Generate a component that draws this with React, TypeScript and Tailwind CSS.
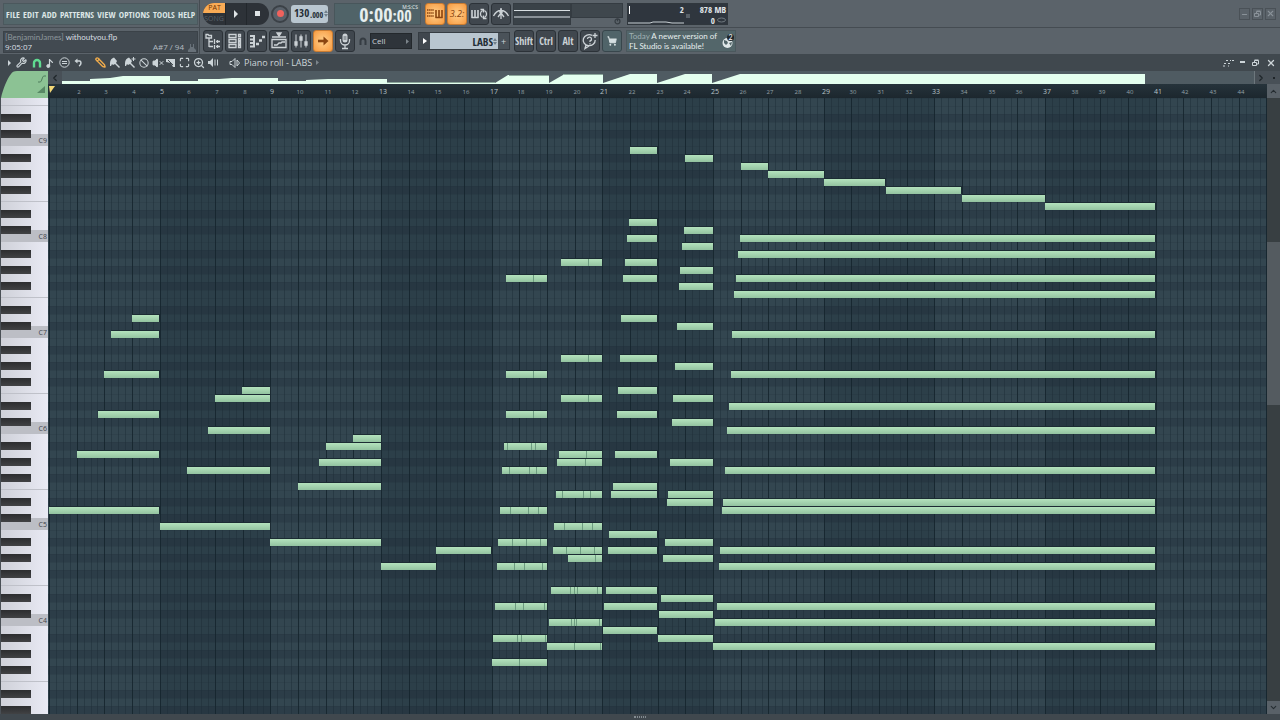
import { useState } from "react";
import type { ReactNode } from "react";
import { clsx } from "clsx";
import {
  Ban,
  ChevronDown,
  ChevronLeft,
  ChevronRight,
  ChevronUp,
  Maximize,
  Minus,
  Pencil,
  ShoppingCart,
  VolumeX,
  Wrench,
  X,
  ZoomIn,
} from "lucide-react";

const ROW = 8;
const ROWS = 77;
const BAR = 27.67;
const BARS = 120;
const LABELLED_BARS = 44;

// the topmost row is F9, one row per semitone going down
const NAMES = ["F", "E", "D#", "D", "C#", "C", "B", "A#", "A", "G#", "G", "F#"];
const rows = Array.from({ length: ROWS }, (_, i) => {
  const name = NAMES[i % 12];
  return { name, octave: 9 - Math.floor((i + 6) / 12), black: name.includes("#") };
});

const barX = (bar: number) => Math.round(1 + (bar - 1) * BAR);

type Chord = { end: number; notes: [start: number, row: number, ...cuts: number[]][] };

// all x values are pixels from the left edge of the grid
const CHORDS: Chord[] = [
  { end: 111, notes: [[1, 51], [29, 44], [50, 39], [56, 34], [63, 29], [84, 27]] },
  { end: 222, notes: [[112, 53], [139, 46], [160, 41], [167, 37], [194, 36]] },
  { end: 333, notes: [[222, 55], [250, 48], [271, 45], [278, 43], [305, 42]] },
  { end: 388, notes: [[333, 58]] },
  { end: 443, notes: [[388, 56]] },
  {
    end: 499,
    notes: [
      [444, 70, 471], [445, 67, 469, 473, 497], [447, 63, 467, 475, 496], [449, 58, 466, 476, 494],
      [450, 55, 464, 478, 492], [452, 51, 462, 480, 490], [454, 46, 461, 481, 488], [456, 43, 459, 483, 487],
      [458, 39, 485], [458, 34, 485], [458, 22, 485],
    ],
  },
  {
    end: 554,
    notes: [
      [499, 68, 526, 552], [501, 65, 523, 526, 528, 551], [503, 61, 522, 526, 529, 549], [520, 57, 547],
      [505, 56, 518, 532, 546], [506, 53, 516, 534, 544], [508, 49, 514, 535, 542], [509, 45, 537],
      [511, 44, 538], [513, 37, 540], [513, 32, 540], [513, 20, 540],
    ],
  },
  {
    end: 609,
    notes: [
      [555, 66], [556, 63], [558, 61], [560, 56], [561, 54], [563, 49], [565, 48], [567, 44], [569, 39],
      [570, 36], [572, 32], [573, 27], [575, 22], [577, 20], [579, 17], [581, 15], [582, 6],
    ],
  },
  {
    end: 665,
    notes: [
      [610, 67], [611, 64], [613, 62], [615, 57], [617, 55], [619, 50], [620, 49], [622, 45], [624, 40],
      [625, 37], [627, 33], [629, 28], [631, 23], [632, 21], [634, 18], [636, 16], [637, 7],
    ],
  },
  {
    end: 1107,
    notes: [
      [665, 68], [667, 65], [669, 63], [671, 58], [672, 56], [674, 51], [675, 50], [677, 46], [679, 41],
      [681, 38], [683, 34], [684, 29], [686, 24], [688, 22], [690, 19], [692, 17], [997, 13],
    ],
  },
  { end: 720, notes: [[693, 8]] },
  { end: 776, notes: [[720, 9]] },
  { end: 837, notes: [[776, 10]] },
  { end: 913, notes: [[838, 11]] },
  { end: 997, notes: [[914, 12]] },
];

const MENU = ["FILE", "EDIT", "ADD", "PATTERNS", "VIEW", "OPTIONS", "TOOLS", "HELP"];

const CONDENSED = "font-['Open_Sans_Condensed','Liberation_Sans_Narrow','Liberation_Sans',sans-serif]";
const NARROW = "font-['Liberation_Sans_Narrow','Open_Sans_Condensed','Liberation_Sans',sans-serif]";

function Glyph({ children, size = 18 }: { children: ReactNode; size?: number }) {
  return (
    <svg width={size} height={size} viewBox="0 0 18 18" fill="none" stroke="currentColor" strokeWidth="1.3">
      {children}
    </svg>
  );
}

function ToolButton({ label, lit, teal, children }: { label: string; lit?: boolean; teal?: boolean; children: ReactNode }) {
  return (
    <button
      aria-label={label}
      className={clsx(
        "flex h-[22px] w-5 shrink-0 items-center justify-center rounded-[3px] border",
        lit && "border-[#c97c32] bg-radial from-[#ffd08a] to-[#f79a3d] text-[#8a4510]",
        teal && "border-[#38464c] bg-[#506469] text-[#d5dfe1]",
        !lit && !teal && "border-[#2c3238] bg-[#40474e] text-[#ccd2d6]"
      )}
    >
      {children}
    </button>
  );
}

function MenuBar() {
  return (
    <nav className="m-[3px] mr-0 flex h-[22px] w-[195px] items-center justify-between border border-[#4b585d] bg-[#53666a] px-[2px]">
      {MENU.map((item) => (
        <button key={item} className={`text-[9px] leading-none text-[#dde6e6] ${CONDENSED}`}>
          {item}
        </button>
      ))}
    </nav>
  );
}

function HintPanel() {
  return (
    <div className="m-[3px] mr-0 flex h-[22px] w-[195px] flex-col justify-center border border-[#3b4248] bg-[#424a51] px-px text-[8px] leading-[10px] text-[#d9dfe2]">
      <div className="font-['Lato',sans-serif]">
        <span className="text-[#8d969c]">[BenjaminJames]</span> withoutyou.flp
      </div>
      <div className="flex items-center justify-between">
        <span>9:05:07</span>
        <span className="flex items-center gap-1 text-[#b4bcc1]">
          A#7 / 94
          <svg width="8" height="9" viewBox="0 0 8 9" fill="#69727a">
            <path d="M2 1h1v3h2V1h1v4l2 2v2H0V7l2-2z" />
          </svg>
        </span>
      </div>
    </div>
  );
}

function Transport() {
  const [pattern, setPattern] = useState(true);
  const [tempo, setTempo] = useState("130");

  return (
    <div className="flex h-7 items-center pl-[3px]">
      <div className="flex h-[22px] w-[66px] overflow-hidden rounded-full bg-[#2d3238] text-[#dfe4e6]">
        <button
          onClick={() => setPattern((v) => !v)}
          className="flex w-[22px] flex-col text-center text-[7px] leading-[10px] font-['Open_Sans',sans-serif]"
        >
          <span className={clsx("h-2.5 w-full pl-px", pattern ? "bg-[#f9ab55] text-[#6b3205]" : "text-[#59616a]")}>PAT</span>
          <span className={clsx("h-3 w-full leading-[11px]", pattern ? "text-[#59616a]" : "bg-[#f9ab55] text-[#6b3205]")}>SONG</span>
        </button>
        <button aria-label="Play" className="flex w-[22px] items-center justify-center border-x border-[#22272c]">
          <svg width="6" height="8" viewBox="0 0 6 8" fill="currentColor"><path d="M1 0l4 4-4 4z" /></svg>
        </button>
        <button aria-label="Stop" className="flex flex-1 items-center justify-center">
          <svg width="6" height="6" fill="currentColor"><rect width="5" height="5" /></svg>
        </button>
      </div>
      <button aria-label="Record" className="ml-[2px] flex size-[18px] items-center justify-center rounded-full border-2 border-[#3b4147] bg-[#59616a]">
        <span className="size-[7px] rounded-full bg-[#f0625d]" />
      </button>
      <label className={`ml-[2px] flex h-[18px] w-[37px] items-center rounded-[3px] bg-[#b9c6d0] pl-[3px] text-[#222c34] ${NARROW}`}>
        <input
          aria-label="Tempo"
          value={tempo}
          onChange={(e) => setTempo(e.target.value)}
          className="w-4 bg-transparent text-[11px] outline-none"
        />
        <span className="w-3.5 pt-0.5 text-[8px]">.000</span>
        <svg width="4" height="7" viewBox="0 0 4 7" fill="#71808b"><path d="M2 0l2 3H0zM2 7l2-3H0z" /></svg>
      </label>
      <div className="relative ml-[6px] flex h-[22px] w-[87px] items-baseline justify-center border border-[#48565b] bg-[#506368] pl-4 text-[#e6eeee]">
        <span className={`text-[20px] leading-[22px] ${NARROW}`}>0:00</span>
        <span className={`text-[16px] leading-[22px] ${NARROW}`}>:00</span>
        <span className="absolute top-0 right-[2px] text-[5px] leading-[6px]">M:S:CS</span>
      </div>
      <div className="ml-1 flex gap-0.5">
        <ToolButton label="Typing keyboard" lit>
          <Glyph>
            <path d="M1 5h7M1 8h7M1 11h7" strokeDasharray="1.5 .6" />
            <path d="M10 5v8M13 5v8M16 5v8M9.500 12.500h7" strokeWidth="1.600" />
          </Glyph>
        </ToolButton>
        <ToolButton label="Countdown" lit>
          <span className="text-[9px] leading-none italic font-['Open_Sans',sans-serif]">3.2:</span>
        </ToolButton>
        <ToolButton label="Blend recording">
          <Glyph>
            <path d="M2 5v8M5 5v8M8 5v8M1.500 12.500h7" strokeWidth="1.600" />
            <path d="M12.500 5.500a4 4 0 0 0 0 7M14.500 5.500a4 4 0 0 1 0 7M10.500 4.500h3v3M16.500 13.500h-3v-3" />
          </Glyph>
        </ToolButton>
        <ToolButton label="Metronome">
          <Glyph>
            <path d="M1.500 11c2-4 4-5.500 7.500-5.500s5.500 1.500 7.500 5.500M9 3v11M9 8l-3 4M9 8l3 4" />
            <path d="M9 3l2 4-2 3-2-3z" fill="currentColor" stroke="none" />
          </Glyph>
        </ToolButton>
      </div>
      <div className="ml-0.5 flex h-[22px]">
        <div className="flex w-[58px] flex-col justify-center gap-[5px] border border-[#353c42] bg-[#3a4248]">
          <span className="h-px bg-[#d9dfe2]" />
          <span className="h-0.5 bg-[#8a9197]" />
        </div>
        <div className="flex w-[52px] flex-col">
          <span className="h-4 border border-[#353c42] bg-[#3f474d]" />
          <svg width="7" height="7" viewBox="0 0 7 7" className="mr-0.5 self-end" fill="none" stroke="#363d43" strokeWidth="1.300">
            <circle cx="3.500" cy="3.500" r="2.600" />
            <path d="M3.500 3.500V1" />
          </svg>
        </div>
      </div>
      <div className={`ml-1 flex h-[22px] w-[101px] border border-[#30373d] bg-[#2f363e] text-[9px] leading-[11px] text-[#e2e7ea] ${CONDENSED}`}>
        <div className="flex w-[56px] flex-col justify-between text-right">
          <span className="flex justify-between"><i className="ml-px mt-0.5 h-2 w-px bg-white" />2</span>
          <svg width="56" height="3" viewBox="0 0 56 3" fill="none" stroke="#c9d0d4"><path d="M0 2h22l3-1h13l6 1h12" /></svg>
        </div>
        <i className="mt-2.5 ml-0.5 size-1 bg-[#596168]" />
        <div className="flex flex-1 flex-col items-end pr-px">
          <span>878 MB</span>
          <span className="flex items-center gap-0.5">
            0
            <svg width="9" height="6" viewBox="0 0 9 6" fill="none" stroke="#70797f"><ellipse cx="4.500" cy="3" rx="4" ry="2" /></svg>
          </span>
        </div>
      </div>
    </div>
  );
}

function Shortcuts() {
  return (
    <div className="flex h-[26px] items-center pl-[3px]">
      <div className="flex gap-0.5">
        <ToolButton label="Browser">
          <Glyph>
            <path d="M2 2.500h2l1 1h2.500V6H2zM5 6v9M5 9.500h4M5 14.500h4" />
            <path d="M10.500 7v5M10.500 13v4M12 9.500h4M13.500 8v3M12 14.500h4M13.500 13v3" />
          </Glyph>
        </ToolButton>
        <ToolButton label="Channel rack">
          <Glyph>
            <path d="M3 2.500h7v3H3zM3 7.500h7v3H3zM3 12.500h7v3H3z" />
            <path d="M12.500 2.500h2v2h-2zM12.500 6.500h2v2h-2zM12.500 10h2v2h-2zM12.500 13.500h2v2h-2z" />
          </Glyph>
        </ToolButton>
        <ToolButton label="Piano roll">
          <Glyph>
            <path d="M2 4h4M2 7.500h4M2 11h4M2 14.500h4M6 3v12.500" strokeWidth="2" />
            <path d="M8 12h3M11 8.500h3M14 5h3" strokeWidth="2.400" />
          </Glyph>
        </ToolButton>
        <ToolButton label="Playlist">
          <Glyph>
            <path d="M2 7.500h14v8H2zM2 5h14" />
            <path d="M4 13h3l2-2h2l1-1h3" />
            <path d="M7 1h4L9 4z" fill="currentColor" />
          </Glyph>
        </ToolButton>
        <ToolButton label="Mixer">
          <Glyph>
            <path d="M4 2.500v13M9 2.500v13M14 2.500v13" strokeWidth="1" />
            <path d="M3 10h2v3H3zM8 5h2v3H8zM13 10h2v3h-2z" fill="currentColor" />
          </Glyph>
        </ToolButton>
        <ToolButton label="Step forward" lit>
          <Glyph><path d="M4 9h7" strokeWidth="2.600" /><path d="M9.500 4.500L14.500 9l-5 4.500z" fill="currentColor" stroke="none" /></Glyph>
        </ToolButton>
        <ToolButton label="Record audio">
          <Glyph>
            <rect x="6.500" y="1.500" width="5" height="9" rx="2.500" fill="currentColor" stroke="none" />
            <path d="M7.500 5h3M7.500 7h3" stroke="#40474e" strokeWidth=".8" />
            <path d="M4.500 7v1.500a4.500 4.500 0 0 0 9 0V7M9 13v3M6 16.500h6" />
          </Glyph>
        </ToolButton>
      </div>
      <svg width="8" height="8" viewBox="0 0 8 8" className="ml-1" fill="none" stroke="#353c42" strokeWidth="2">
        <path d="M1.500 8V4a2.500 2.500 0 0 1 5 0v4" />
      </svg>
      <div className="ml-[3px] flex h-4 w-[42px] items-center border border-[#23282c] bg-[#2e343a] pl-px text-[#ccd2d6]">
        <select aria-label="Snap" className="w-[34px] appearance-none bg-transparent text-[8px] leading-none outline-none font-['Open_Sans',sans-serif]">
          <option>Cell</option>
          <option>Beat</option>
          <option>Bar</option>
        </select>
        <svg width="4" height="5" viewBox="0 0 4 5" fill="#7c858b"><path d="M0 0l3 2.500L0 5z" /></svg>
      </div>
      <div className="ml-1.5 flex h-[18px] items-stretch border border-[#353c42]">
        <button aria-label="Channel menu" className="flex w-[11px] items-center justify-center bg-[#40474e] text-white">
          <svg width="4" height="6" viewBox="0 0 4 6" fill="currentColor"><path d="M0 0l4 3-4 3z" /></svg>
        </button>
        <select aria-label="Channel" className={`w-[63px] appearance-none bg-[#b9c6d0] text-right text-[11px] leading-none text-[#222c34] outline-none [text-align-last:right] ${NARROW}`}>
          <option>LABS</option>
        </select>
        <span className="flex w-[5px] items-center bg-[#b9c6d0]">
          <svg width="4" height="7" viewBox="0 0 4 7" fill="#71808b"><path d="M2 0l2 3H0zM2 7l2-3H0z" /></svg>
        </span>
        <button aria-label="Add channel" className="w-[11px] bg-[#4a5259] text-[9px] leading-none text-[#ccd2d6]">+</button>
      </div>
      <div className={`ml-1 flex gap-0.5 text-[10px] ${NARROW}`}>
        {["Shift", "Ctrl", "Alt"].map((key) => (
          <ToolButton key={key} label={key}>{key}</ToolButton>
        ))}
        <ToolButton label="Help">
          <Glyph>
            <path d="M11 3.300A6 5.500 0 1 0 14.200 8M5 13l-1 3.500L8 14" />
            <path d="M6.500 7a2 2 0 1 1 2.500 2v1M9 11.300v1.200M14 1v5M11.500 3.500h5" />
          </Glyph>
        </ToolButton>
        <ToolButton label="Shop" teal><ShoppingCart size={10} fill="currentColor" strokeWidth={2.5} /></ToolButton>
      </div>
      <div className="ml-1 flex h-[22px] w-[110px] items-center justify-between border border-[#4b585d] bg-[#53666a] pl-0.5 pr-px text-[8px] leading-[10px] text-[#e6eeee] font-['Lato',sans-serif]">
        <p className="whitespace-nowrap">
          <span className="text-[#9fb0b3]">Today</span> A newer version of
          <br />
          FL Studio is available!
        </p>
        <svg width="12" height="15" viewBox="0 0 12 15">
          <circle cx="5.500" cy="9" r="5" fill="#dfe7e8" />
          <path d="M2 6l3 1 1 2-2 2-2-2zM7 9l3-1-1 4z" fill="#53666a" />
          <circle cx="8.500" cy="3.500" r="3.500" fill="#1f262b" />
          <text x="8.500" y="6" textAnchor="middle" fontSize="7" fill="#fff">2</text>
        </svg>
      </div>
    </div>
  );
}

function WindowButtons() {
  return (
    <div className="flex gap-0.5 text-[#8a9299]">
      <button aria-label="Minimize" className="flex h-3 w-[11px] items-end justify-center border border-[#4a5157] pb-px"><Minus size={7} strokeWidth={4} /></button>
      <button aria-label="Restore" className="flex h-3 w-[11px] items-center justify-center border border-[#4a5157]"><Restore /></button>
      <button aria-label="Close" className="flex h-3 w-[11px] items-center justify-center border border-[#4a5157]"><X size={9} strokeWidth={3} /></button>
    </div>
  );
}

function Restore() {
  return (
    <svg width="8" height="8" viewBox="0 0 8 8" fill="none" stroke="currentColor">
      <path d="M.5 3.500h4v3h-4zM2.500 3V1.500h4v3.500H5M2.500 1h4" />
    </svg>
  );
}

function RollTitle() {
  return (
    <div className="flex h-[17px] items-center bg-[#40484e] pl-1.5 pr-1 text-[#ccd4d8]">
      <div className="flex w-[77px] items-center justify-between">
        <svg width="6" height="6" viewBox="0 0 6 6" fill="currentColor"><path d="M2 0l3 3-3 3z" /></svg>
        <Wrench size={11} strokeWidth={2.5} />
        <svg width="10" height="10" viewBox="0 0 10 10" fill="none" stroke="#5fdc91" strokeWidth="2.400"><path d="M2 9.500V5a3 3 0 0 1 6 0v4.500" /></svg>
        <svg width="8" height="10" viewBox="0 0 8 10" fill="none" stroke="currentColor"><path d="M3.500 8V1c0 2 3 2 3 4" strokeWidth="1.200" /><circle cx="2.300" cy="8" r="1.500" fill="currentColor" /></svg>
        <svg width="11" height="11" viewBox="0 0 11 11" fill="none" stroke="currentColor"><circle cx="5.500" cy="5.500" r="4.700" /><path d="M3 4.500h5M3 6.500h5" /></svg>
        <svg width="9" height="9" viewBox="0 0 9 9" fill="none" stroke="currentColor" strokeWidth="1.500"><path d="M2 3h3.500c2 0 2 4-.5 5" /><path d="M3.500.5v5L.5 3z" fill="currentColor" stroke="none" /></svg>
      </div>
      <div className="ml-3 flex w-[124px] items-center justify-between">
        <Pencil size={11} strokeWidth={3} className="-scale-x-100 text-[#f0ac4c]" />
        <svg width="12" height="11" viewBox="0 0 12 11" fill="currentColor"><path d="M1 6c0-3 2-5 4-5.500L8 4 7 6l4 4-1 1-4-4-2 1-1-1-1 2H1z" /></svg>
        <svg width="12" height="11" viewBox="0 0 12 11" fill="currentColor"><path d="M1 6c0-3 2-5 4-5.500L8 4 7 6l4 4-1 1-4-4-2 1-1-1-1 2H1zM9 0h1v4H9zM7.500 1.500h4v1h-4z" /></svg>
        <Ban size={10} strokeWidth={2.5} />
        <VolumeX size={12} fill="currentColor" strokeWidth={2} />
        <svg width="10" height="10" viewBox="0 0 10 10" fill="currentColor"><path d="M0 1h9v8H7L5 5 0 4z" /><path d="M2 2l5 5" stroke="#40484e" /></svg>
        <Maximize size={11} strokeWidth={2.5} />
        <ZoomIn size={12} strokeWidth={2.5} />
        <svg width="11" height="9" viewBox="0 0 11 9" fill="currentColor"><path d="M0 3h2l3-3v9L2 6H0zM6.500 1.500h1v6h-1zM9 1.500h1v6H9z" /></svg>
      </div>
      <h1 className="ml-2.5 flex items-center gap-1 text-[9px] leading-none whitespace-nowrap">
        <svg width="11" height="10" viewBox="0 0 11 10" fill="none" stroke="currentColor"><path d="M1 3.500h2l3-3v9l-3-3H1zM8 2l2.500 3L8 8z" /></svg>
        Piano roll - LABS
        <svg width="3" height="5" viewBox="0 0 3 5" fill="#7c858b"><path d="M0 0l3 2.500L0 5z" /></svg>
      </h1>
      <div className="ml-auto flex items-center gap-1.5">
        <svg width="11" height="8" viewBox="0 0 11 8" stroke="currentColor"><path d="M0 7h2M1 4.500h2M3 1.500h2M5 7h1M5 4.500h2M7 1.500h1M9 1.500h2" /></svg>
        <button aria-label="Minimize roll"><svg width="6" height="8" fill="currentColor"><rect y="2" width="5" height="2" /></svg></button>
        <button aria-label="Restore roll"><Restore /></button>
        <button aria-label="Close roll"><X size={10} strokeWidth={3} /></button>
      </div>
    </div>
  );
}

function Overview() {
  return (
    <div className="flex h-[13px] items-stretch bg-[#4f5b62] text-[#20272b]">
      <button aria-label="Scroll left" className="flex w-[14px] items-center justify-center bg-[#485057]"><ChevronLeft size={10} strokeWidth={3} /></button>
      <svg className="min-w-0 flex-1" height="13">
        <path
          d="M0 10h28v-2l20-1 13-2h47v5h28v-2h21l13-1h46v3h28v-1l22-1h59v3h108v1l13-8h41v8l14-8h40v8l27-9h27v9l28-9h27v9l28-9h405v10H0z"
          fill="#e4ffef"
        />
        <path d="M447 4.500h40M501 3.500h40" stroke="#8ba79b" />
        <path d="M325 11.500h54M379 11.500h54" stroke="#8ba79b" />
      </svg>
      <button aria-label="Scroll right" className="flex w-[13px] items-center justify-center border-l border-[#6d777d] bg-[#485057]"><ChevronRight size={10} strokeWidth={3} /></button>
      <button aria-label="Overview options" className="flex w-[13px] items-center justify-center bg-[#485057]"><i className="size-0.5 bg-[#1f2529]" /></button>
    </div>
  );
}

function Ruler() {
  return (
    <div className="flex h-[14px] bg-linear-to-b from-[#26333b] to-[#1c272e]">
      <svg className="min-w-0 flex-1" height="14">
        <path d="M1 2h6L2 9z" fill="#f4d878" />
        {Array.from({ length: LABELLED_BARS }, (_, i) => i + 1).slice(1).map((bar) => (
          <text
            key={bar}
            x={barX(bar) + 2}
            y="10"
            textAnchor="middle"
            fill={bar % 4 === 1 ? "#b9c4c9" : "#94a1a8"}
            fontSize={bar % 4 === 1 ? 7 : 6}
          >
            {bar}
          </text>
        ))}
      </svg>
      <button aria-label="Scroll up" className="flex w-[13px] items-center justify-center bg-[#596168] text-[#262d32]"><ChevronUp size={9} strokeWidth={3} /></button>
    </div>
  );
}

function Keys() {
  return (
    <div className="w-12 shrink-0 border-l border-[#4a5056] bg-linear-to-r from-[#cfd1d9] to-[#e9eaf4]">
      {rows.map(({ name, octave, black }, i) => (
        <div
          key={i}
          className={clsx(
            "relative h-2",
            name === "C" && "bg-[#bcbec5]",
            name === "F" && "border-b border-[#bfc1c9]"
          )}
        >
          {black && <div className="h-2 w-[30px] bg-linear-to-b from-[#2c2d2f] to-[#414244]" />}
          {name === "C" && (
            <span className="absolute right-0 bottom-0 h-3 w-[17px] bg-[#bcbec5] pr-px text-right text-[7px] leading-[13px] text-[#3f444a]">
              C{octave}
            </span>
          )}
        </div>
      ))}
    </div>
  );
}

function Grid() {
  const height = ROWS * ROW;
  return (
    <svg className="min-w-0 flex-1 bg-[#30424c]" height={height} shapeRendering="crispEdges">
      <defs>
        <linearGradient id="note" x1="0" y1="0" x2="0" y2="1">
          <stop offset="0" stopColor="#b4e2bd" />
          <stop offset="1" stopColor="#93c3a0" />
        </linearGradient>
      </defs>
      {rows.map((row, i) => (
        <rect key={i} y={i * ROW} width="100%" height={ROW} fill={row.black ? "#2c3d48" : "#334650"} />
      ))}
      {rows.map((_, i) => (
        <rect key={i} y={i * ROW} width="100%" height="1" fill="#22323c" opacity="0.25" />
      ))}
      {Array.from({ length: BARS / 8 }, (_, i) => (
        <rect key={i} x={barX(i * 8 + 5)} width={BAR * 4} height={height} fill="#16222b" opacity="0.2" />
      ))}
      {Array.from({ length: BARS * 4 }, (_, i) => (
        <rect
          key={i}
          x={barX(i / 4 + 1)}
          width="1"
          height={height}
          fill={i % 4 === 0 ? "#15242d" : "#1d2d37"}
          opacity={i % 4 === 0 ? 0.85 : 0.5}
        />
      ))}
      {CHORDS.map(({ end, notes }) =>
        notes.map(([start, row, ...cuts]) => (
          <g key={`${start}-${row}`}>
            <rect x={start} y={row * ROW} width={end - start + 1} height="8" fill="#1c2b33" />
            <rect x={start} y={row * ROW + 1} width={end - start} height="7" rx="1" fill="url(#note)" />
            {cuts.map((cut) => (
              <rect key={cut} x={cut} y={row * ROW + 1} width="1" height="7" fill="#6d9c80" />
            ))}
          </g>
        ))
      )}
    </svg>
  );
}

export default function App() {
  return (
    <div className="w-full overflow-hidden bg-[#40484e] font-['Open_Sans','Noto_Sans',sans-serif]">
      <header className="flex h-[54px] bg-[#5b636a]">
        <div className="w-[200px] shrink-0 border-r border-[#454c52]">
          <div className="flex h-7 border-b border-[#454c52]"><MenuBar /></div>
          <div className="flex"><HintPanel /></div>
        </div>
        <div className="min-w-0 flex-1">
          <div className="flex h-7 items-center justify-between border-b border-[#454c52] pr-1">
            <Transport />
            <WindowButtons />
          </div>
          <Shortcuts />
        </div>
      </header>
      <RollTitle />
      <div className="flex">
        <svg width="48" height="27" className="shrink-0 bg-[#40484e]">
          <path d="M1 27C3 18 7 8 11 3c1-2 3-3 6-3h31v27z" fill="#8cc294" />
          <path d="M38 11h2c2 0 2-6 4-6h2" fill="none" stroke="#4f7d5c" />
          <path d="M45 15v7h-8z" fill="#588865" />
        </svg>
        <div className="min-w-0 flex-1">
          <Overview />
          <Ruler />
        </div>
      </div>
      <main className="flex">
        <Keys />
        <Grid />
        <div className="flex w-[13px] shrink-0 flex-col bg-[#383f42]">
          <div className="mt-36 h-[163px] bg-[#545b60]" />
          <button aria-label="Scroll down" className="mt-auto flex h-[13px] items-center justify-center bg-[#596168] text-[#262d32]"><ChevronDown size={9} strokeWidth={3} /></button>
        </div>
      </main>
      <footer className="flex h-1.5 items-center justify-center">
        <i className="h-0.5 w-3 border-y border-dotted border-[#838b91]" />
      </footer>
    </div>
  );
}
